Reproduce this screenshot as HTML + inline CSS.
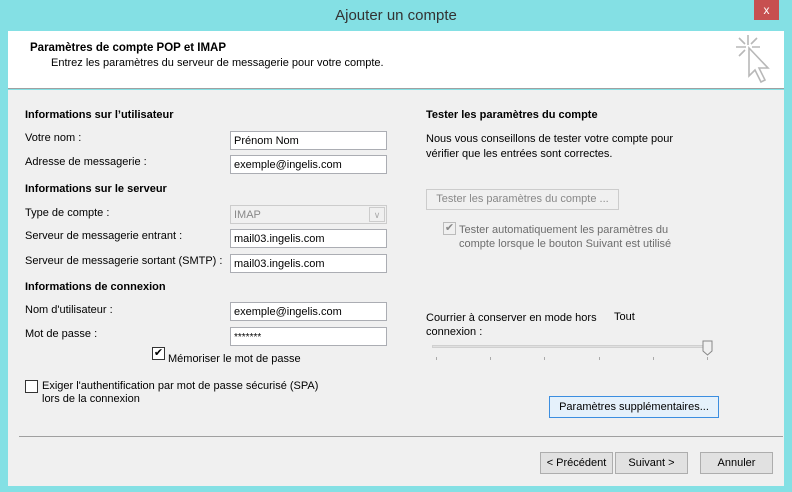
<!DOCTYPE html>
<html><head><meta charset="utf-8"><style>
*{margin:0;padding:0;box-sizing:border-box}
body{width:792px;height:492px;background:#84e0e4;font-family:"Liberation Sans",sans-serif;font-size:11px;color:#000;position:relative;overflow:hidden}
.a{position:absolute;white-space:nowrap}
.title{left:0;top:7px;width:792px;text-align:center;font-size:15px;color:#333}
.close{left:754px;top:0;width:25px;height:20px;background:#c75050;color:#fff;text-align:center;font-size:12px;line-height:20px}
.hdr{left:8px;top:31px;width:776px;height:58px;background:#fff;border-bottom:1px solid #a0a0a0}
.body{left:8px;top:90px;width:776px;height:396px;background:#f0f0f0}
.b{font-weight:bold}
.in{position:absolute;left:230px;width:157px;height:19px;background:#fff;border:1px solid #abadb3;padding:3px 0 0 3px;font-size:11px}
.btn{position:absolute;height:22px;border:1px solid #adadad;background:#e1e1e1;text-align:center;line-height:20px}
.cb{position:absolute;width:13px;height:13px;border:1px solid #333;background:#fff}
.tick{position:absolute;top:357px;width:1px;height:3px;background:#aaa}
</style></head><body>
<div class="a title">Ajouter un compte</div>
<div class="a close">x</div>
<div class="a hdr"></div>
<div class="a b" style="left:30px;top:42px;font-size:11.5px">Paramètres de compte POP et IMAP</div>
<div class="a" style="left:51px;top:57px">Entrez les paramètres du serveur de messagerie pour votre compte.</div>
<svg class="a" style="left:734px;top:33px" width="40" height="54" viewBox="0 0 40 54" fill="none" stroke="#b8b8b8" stroke-width="1.6">
<path d="M14 2v10M2 14h10M5 5l6 6M23 5l-6 6M5 23l6-6M18 14h8"/>
<path d="M15 15v28l6-6 6 12 4-2-6-12h9z" fill="#fff"/>
</svg>
<div class="a body"></div>
<div class="a b" style="left:25px;top:109px">Informations sur l’utilisateur</div>
<div class="a" style="left:25px;top:132px">Votre nom :</div>
<div class="in" style="top:131px">Prénom Nom</div>
<div class="a" style="left:25px;top:156px">Adresse de messagerie :</div>
<div class="in" style="top:155px">exemple@ingelis.com</div>
<div class="a b" style="left:25px;top:183px">Informations sur le serveur</div>
<div class="a" style="left:25px;top:207px">Type de compte :</div>
<div class="in" style="top:205px;background:#f0f0f0;border-color:#ccc;color:#888">IMAP<span style="position:absolute;right:1px;top:1px;width:16px;height:15px;border:1px solid #ccc;font-size:9px;text-align:center;line-height:14px;color:#aaa">∨</span></div>
<div class="a" style="left:25px;top:230px">Serveur de messagerie entrant :</div>
<div class="in" style="top:229px">mail03.ingelis.com</div>
<div class="a" style="left:25px;top:255px">Serveur de messagerie sortant (SMTP) :</div>
<div class="in" style="top:254px">mail03.ingelis.com</div>
<div class="a b" style="left:25px;top:281px">Informations de connexion</div>
<div class="a" style="left:25px;top:304px">Nom d'utilisateur :</div>
<div class="in" style="top:302px">exemple@ingelis.com</div>
<div class="a" style="left:25px;top:328px">Mot de passe :</div>
<div class="in" style="top:327px;font-size:10px;padding-top:4px">*******</div>
<div class="cb" style="left:152px;top:347px;font-size:11px;line-height:11px;text-align:center">✔</div>
<div class="a" style="left:168px;top:353px">Mémoriser le mot de passe</div>
<div class="cb" style="left:25px;top:380px"></div>
<div class="a" style="left:42px;top:380px;line-height:13px">Exiger l'authentification par mot de passe sécurisé (SPA)<br>lors de la connexion</div>

<div class="a b" style="left:426px;top:109px">Tester les paramètres du compte</div>
<div class="a" style="left:426px;top:132px;line-height:15px">Nous vous conseillons de tester votre compte pour<br>vérifier que les entrées sont correctes.</div>
<div class="btn" style="left:426px;top:189px;width:193px;height:21px;border-color:#ccc;background:#f0f0f0;color:#888;line-height:19px">Tester les paramètres du compte ...</div>
<div class="cb" style="left:443px;top:222px;border-color:#bbb;background:#f0f0f0;color:#888;font-size:11px;line-height:11px;text-align:center">✔</div>
<div class="a" style="left:459px;top:223px;line-height:14px;color:#6d6d6d">Tester automatiquement les paramètres du<br>compte lorsque le bouton Suivant est utilisé</div>
<div class="a" style="left:426px;top:311px;line-height:14px">Courrier à conserver en mode hors<br>connexion :</div>
<div class="a" style="left:614px;top:311px">Tout</div>
<div class="a" style="left:432px;top:345px;width:279px;height:3px;background:#e0e0e0;border:1px solid #d0d0d0"></div>
<svg class="a" style="left:702px;top:340px" width="11" height="16"><path d="M1 1h9v10l-4.5 4l-4.5-4z" fill="#f0f0f0" stroke="#888"/></svg>
<div class="tick" style="left:436px"></div><div class="tick" style="left:490px"></div><div class="tick" style="left:544px"></div><div class="tick" style="left:599px"></div><div class="tick" style="left:653px"></div><div class="tick" style="left:707px"></div>
<div class="btn" style="left:549px;top:396px;width:170px;border-color:#3c8ee0;background:#e5f1fb">Paramètres supplémentaires...</div>
<div class="a" style="left:19px;top:436px;width:764px;height:1px;background:#a0a0a0"></div>
<div class="btn" style="left:540px;top:452px;width:73px">&lt; Précédent</div>
<div class="btn" style="left:615px;top:452px;width:73px">Suivant &gt;</div>
<div class="btn" style="left:700px;top:452px;width:73px">Annuler</div>
</body></html>
